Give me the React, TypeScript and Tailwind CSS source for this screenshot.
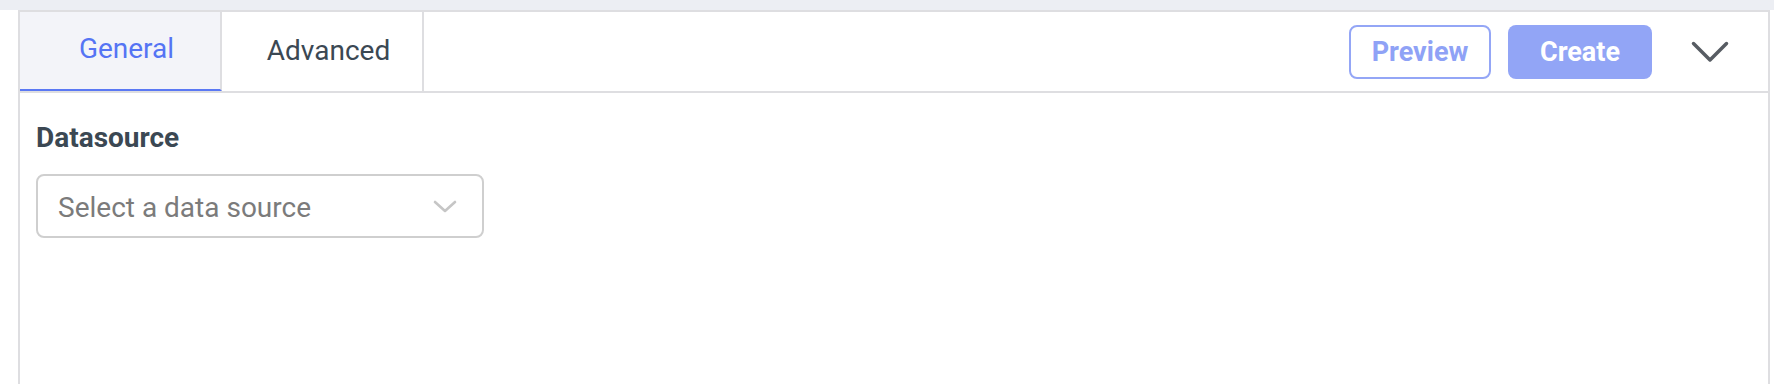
export default function App() {
  return (
    <div className="w-[1774px] h-[384px] bg-white font-['Roboto',sans-serif] overflow-hidden">
      {/* top strip */}
      <div className="h-[10px] bg-[#eceef3]" />

      {/* panel */}
      <div className="ml-[18px] mr-[4px] h-[374px] border-l-2 border-r-2 border-t-2 border-[#dedee1] flex flex-col">
        {/* header */}
        <div className="h-[81px] flex items-stretch border-b-2 border-[#dedee1]">
          <div className="w-[202px] flex items-center justify-center pl-[13px] pb-[4px] bg-[#f3f4f9] border-r-2 border-r-[#dedee1] border-b-2 border-b-[#5a78f4]">
            <span className="text-[28px] text-[#5574f4]">General</span>
          </div>
          <div className="w-[202px] flex items-center justify-center pl-[13px] pb-[2px] border-r-2 border-[#dedee1]">
            <span className="text-[28px] text-[#3b4853]">Advanced</span>
          </div>

          <div className="ml-auto flex items-center pr-[39px] pt-[1px]">
            <button className="w-[142px] h-[54px] rounded-[8px] border-2 border-[#94a6f6] bg-white text-[27px] font-bold text-[#8fa2f6]">
              Preview
            </button>
            <button className="ml-[17px] w-[144px] h-[54px] rounded-[8px] bg-[#92a5f6] text-[27px] font-bold text-white">
              Create
            </button>
            <svg className="ml-[39px]" width="38" height="22" viewBox="0 0 38 22" fill="none">
              <path d="M2.5 2.5 L19 19 L35.5 2.5" stroke="#575c63" strokeWidth="3.5" strokeLinecap="round" strokeLinejoin="round" />
            </svg>
          </div>
        </div>

        {/* body */}
        <div className="pl-[16px] pt-[24px]">
          <div className="text-[28px] font-bold text-[#3b4853]">Datasource</div>
          <div className="mt-[15px] w-[448px] h-[64px] rounded-[8px] border-2 border-[#cfcfcf] flex items-center pl-[20px] pr-[25px] pt-[4px]">
            <span className="text-[28px] text-[#7b7b7b]">Select a data source</span>
            <svg className="ml-auto -mt-[4px]" width="24" height="13" viewBox="0 0 24 13" fill="none">
              <path d="M2 2 L12 11 L22 2" stroke="#c6c6c6" strokeWidth="2.6" strokeLinecap="round" strokeLinejoin="round" />
            </svg>
          </div>
        </div>
      </div>
    </div>
  );
}
